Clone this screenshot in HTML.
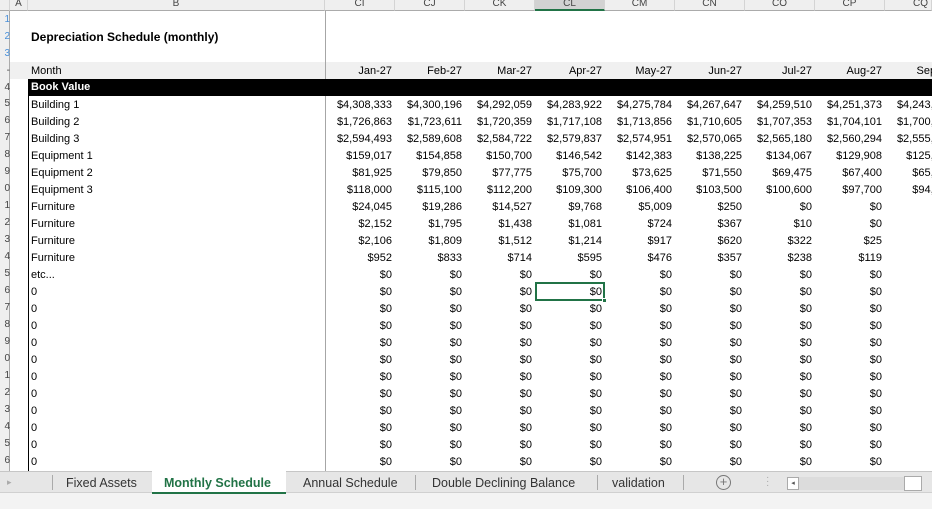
<!DOCTYPE html>
<html><head><meta charset="utf-8"><style>
*{margin:0;padding:0;box-sizing:border-box}
body{width:932px;height:509px;overflow:hidden;background:#fff;font-family:"Liberation Sans",sans-serif;font-size:11px;color:#000;position:relative}
.a{position:absolute}
.colh{top:0;height:11px;background:#efefef;border-bottom:1px solid #ababab;border-right:1px solid #d4d4d4;text-align:center;font-size:10px;line-height:8px;color:#444;overflow:hidden}
.rh{left:0;width:10px;background:#efefef;border-right:1px solid #ababab;color:#444;font-size:10px;text-align:right;overflow:hidden}
.lbl{left:31px;font-size:11px}
.v{text-align:right;font-size:11px;width:67px;white-space:nowrap}
</style></head><body>
<div class="a colh" style="left:0;width:10px"></div>
<div class="a colh" style="left:10px;width:18px">A</div>
<div class="a colh" style="left:28px;width:297px">B</div>
<div class="a colh" style="left:325px;width:70px">CI</div>
<div class="a colh" style="left:395px;width:70px">CJ</div>
<div class="a colh" style="left:465px;width:70px">CK</div>
<div class="a colh" style="left:535px;width:70px;background:#d2d2d2;border-bottom:2px solid #217346">CL</div>
<div class="a colh" style="left:605px;width:70px">CM</div>
<div class="a colh" style="left:675px;width:70px">CN</div>
<div class="a colh" style="left:745px;width:70px">CO</div>
<div class="a colh" style="left:815px;width:70px">CP</div>
<div class="a colh" style="left:885px;width:47px;text-align:left;padding-left:28px">CQ</div>
<div class="a rh" style="top:11px;height:460px"></div>
<div class="a" style="left:10px;top:62px;width:922px;height:17px;background:#f0f0f0"></div>
<div class="a" style="left:325px;top:11px;width:1px;height:460px;background:#a6a6a6"></div>
<div class="a" style="left:28px;top:79px;width:1px;height:392px;background:#000"></div>
<div class="a" style="left:31px;top:30px;font-weight:bold;font-size:12px">Depreciation Schedule (monthly)</div>
<div class="a lbl" style="top:65px">Month</div>
<div class="a" style="left:28px;top:79px;width:904px;height:17px;background:#000;color:#fff;font-weight:bold;padding:2px 0 0 3px">Book Value</div>
<div class="a" id="g"></div>
<div class="a" style="left:535px;top:282px;width:70px;height:19px;border:2px solid #217346"></div>
<div class="a" style="left:602px;top:298px;width:5px;height:5px;background:#217346;border:1px solid #fff"></div>
<div class="a" style="left:0;top:471px;width:932px;height:22px;background:#e6e6e6;border-top:1px solid #c6c6c6"></div>
<div class="a" style="left:0;top:492px;width:932px;height:17px;background:#f3f3f3;border-top:1px solid #d0d0d0"></div>
<div class="a" style="left:7px;top:477px;color:#aaa;font-size:9px">▸</div>
<div class="a" style="left:52px;top:475px;width:1px;height:15px;background:#aaa"></div>
<div class="a" style="left:66px;top:476px;font-size:12.5px;color:#333">Fixed Assets</div>
<div class="a" style="left:152px;top:471px;width:134px;height:23px;background:#fff;border-bottom:2px solid #217346"></div>
<div class="a" style="left:164px;top:476px;font-size:12.5px;color:#217346;font-weight:bold">Monthly Schedule</div>
<div class="a" style="left:303px;top:476px;font-size:12.5px;color:#333">Annual Schedule</div>
<div class="a" style="left:415px;top:475px;width:1px;height:15px;background:#aaa"></div>
<div class="a" style="left:432px;top:476px;font-size:12.5px;color:#333">Double Declining Balance</div>
<div class="a" style="left:597px;top:475px;width:1px;height:15px;background:#aaa"></div>
<div class="a" style="left:612px;top:476px;font-size:12.5px;color:#333">validation</div>
<div class="a" style="left:683px;top:475px;width:1px;height:15px;background:#aaa"></div>
<div class="a" style="left:716px;top:475px;width:15px;height:15px;border:1px solid #777;border-radius:50%;color:#777;text-align:center;line-height:12px;font-size:13px">+</div>
<div class="a" style="left:766px;top:476px;color:#aaa;font-size:10px;line-height:4px">·<br>·<br>·</div>
<div class="a" style="left:787px;top:477px;width:12px;height:13px;background:#fff;border:1px solid #aaa;font-size:7px;color:#555;text-align:center;line-height:11px">◂</div>
<div class="a" style="left:799px;top:477px;width:105px;height:13px;background:#dcdcdc"></div>
<div class="a" style="left:904px;top:476px;width:18px;height:15px;background:#fff;border:1px solid #aaa"></div>
<script>
var L=["Building 1","Building 2","Building 3","Equipment 1","Equipment 2","Equipment 3","Furniture","Furniture","Furniture","Furniture","etc..."];
var D=[
["$4,308,333","$4,300,196","$4,292,059","$4,283,922","$4,275,784","$4,267,647","$4,259,510","$4,251,373","$4,243,236"],
["$1,726,863","$1,723,611","$1,720,359","$1,717,108","$1,713,856","$1,710,605","$1,707,353","$1,704,101","$1,700,850"],
["$2,594,493","$2,589,608","$2,584,722","$2,579,837","$2,574,951","$2,570,065","$2,565,180","$2,560,294","$2,555,408"],
["$159,017","$154,858","$150,700","$146,542","$142,383","$138,225","$134,067","$129,908","$125,750"],
["$81,925","$79,850","$77,775","$75,700","$73,625","$71,550","$69,475","$67,400","$65,325"],
["$118,000","$115,100","$112,200","$109,300","$106,400","$103,500","$100,600","$97,700","$94,800"],
["$24,045","$19,286","$14,527","$9,768","$5,009","$250","$0","$0","$0"],
["$2,152","$1,795","$1,438","$1,081","$724","$367","$10","$0","$0"],
["$2,106","$1,809","$1,512","$1,214","$917","$620","$322","$25","$0"],
["$952","$833","$714","$595","$476","$357","$238","$119","$0"]];
var h="";
var months=["Jan-27","Feb-27","Mar-27","Apr-27","May-27","Jun-27","Jul-27","Aug-27","Sep-27"];
for(var c=0;c<9;c++){var x=325+c*70;h+='<div class="a v" style="left:'+x+'px;top:65px">'+months[c]+'</div>';}
var rn=["4","5","6","7","8","9","0","1","2","3","4","5","6","7","8","9","0","1","2","3","4","5","6"];
h+='<div class="a rh" style="top:82px;border:0;background:none">4</div>';
for(var r=0;r<22;r++){var y=96+r*17;var lab=r<11?L[r]:"0";
h+='<div class="a" style="left:0;top:'+(y+2)+'px;width:10px;text-align:right;font-size:10px;color:#444">'+rn[r+1]+'</div>';
h+='<div class="a lbl" style="top:'+(y+3)+'px">'+lab+'</div>';
for(var c=0;c<9;c++){var x=325+c*70;var t=r<10?D[r][c]:"$0";
h+='<div class="a v" style="left:'+x+'px;top:'+(y+3)+'px">'+t+'</div>';}}
h+='<div class="a" style="left:0;top:11px;width:10px;height:51px;font-size:10px;color:#4a90d9;line-height:17px;text-align:right">1<br>2<br>3</div><div class="a" style="left:0;top:65px;width:10px;font-size:10px;text-align:right;color:#444">-</div>';
document.getElementById("g").outerHTML=h;
</script>
</body></html>
